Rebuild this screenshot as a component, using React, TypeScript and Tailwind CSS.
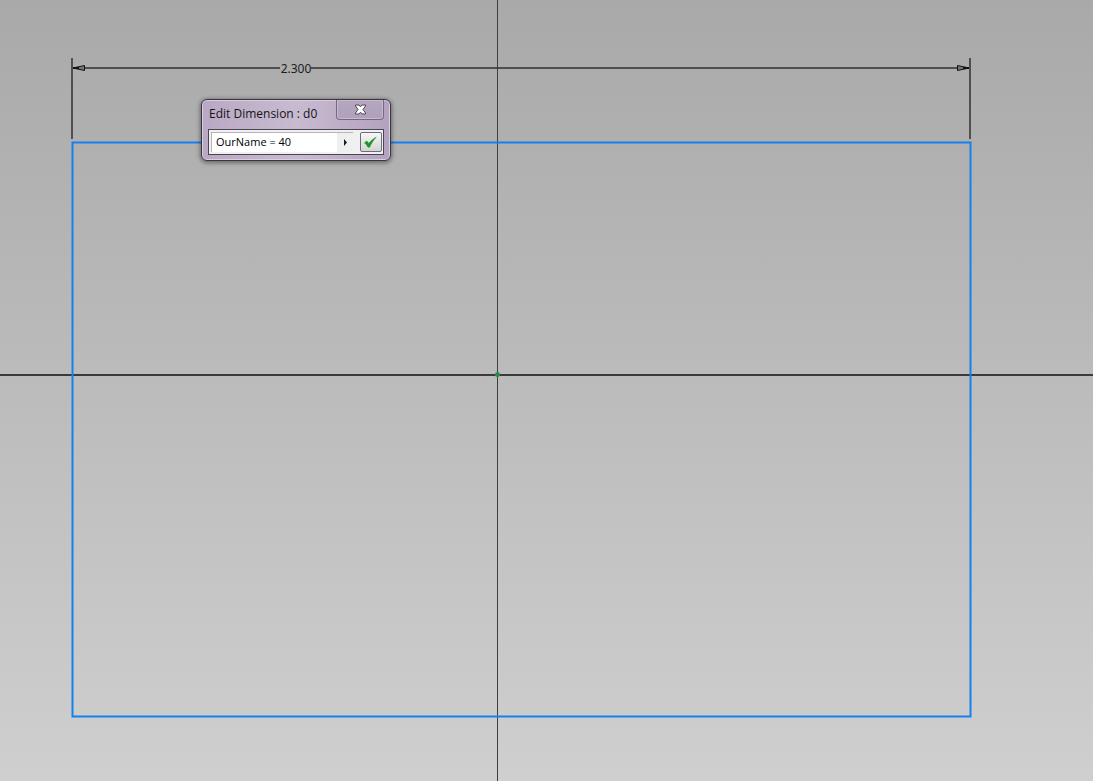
import { useState } from 'react';

function Sketch() {
  return (
    <svg className="absolute inset-0 w-full h-full" role="img" aria-label="Sketch with a width dimension of 2.300">
      {/* origin axes */}
      <line x1="0" y1="375" x2="100%" y2="375" stroke="#3a3a3a" strokeWidth="2" />
      <line x1="497.5" y1="0" x2="497.5" y2="100%" stroke="#3f3f3f" strokeWidth="1" />

      {/* rectangle */}
      <rect x="72.5" y="142.5" width="898" height="574" fill="none" stroke="#1580f0" strokeWidth="2" />
      <circle cx="497.5" cy="374.5" r="2.5" fill="#2a8a52" />

      {/* dimension */}
      <g stroke="#303030" strokeWidth="1">
        <line x1="72" y1="58" x2="72" y2="139" strokeWidth="1.5" />
        <line x1="970" y1="58" x2="970" y2="139" strokeWidth="1.5" />
        <line x1="84" y1="68" x2="280" y2="68" strokeWidth="1.5" />
        <line x1="311" y1="68" x2="958" y2="68" strokeWidth="1.5" />
        <path d="M73 68 L84.5 65.5 V70.5 Z" fill="#777" stroke="#111" />
        <path d="M969 68 L957.5 65.5 V70.5 Z" fill="#777" stroke="#111" />
        <path d="M73 68 H79 M969 68 H963" stroke="#111" strokeWidth="2" />
      </g>
      <text x="296" y="73" textAnchor="middle" className="font-['Noto_Sans',sans-serif] text-[12px]" fill="#1c1c1c">
        2.300
      </text>
    </svg>
  );
}

function EditDimension() {
  const [value, setValue] = useState('OurName = 40');

  return (
    <form
      onSubmit={(e) => e.preventDefault()}
      className="absolute left-[201px] top-[99px] w-[190px] rounded-md border border-[#39343f] bg-linear-to-r from-[#b9a8c4] via-[#c8bbd0] to-[#b3a2bf] px-1.5 pb-[5px] shadow-[inset_0_0_0_1px_#d9cfe0,0_1px_4px_1px_rgba(0,0,0,0.4)]">
      <div className="flex h-[29px] items-start justify-between">
        <label htmlFor="dimension" className="mt-1.5 ml-px font-['Open_Sans',sans-serif] text-[12px] leading-4 text-[#151515]">
          Edit Dimension : d0
        </label>
        <button
          type="button"
          aria-label="Close"
          className="flex h-5 w-12 items-center justify-center rounded-b border border-t-0 border-[#75697f] bg-linear-to-b from-[#b5a7bf] to-[#b0a0bc] shadow-[inset_0_0_0_1px_#c8bbd0]">
          <svg className="h-[11px] w-[13px]" viewBox="0 0 13 11">
            <path
              d="M1.5 1 H5 L6.5 2.8 L8 1 H11.5 V2 L9 5.5 L11.5 9 V10 H8 L6.5 8.2 L5 10 H1.5 V9 L4 5.5 L1.5 2 Z"
              fill="#fff"
              stroke="#4d4657"
            />
          </svg>
        </button>
      </div>

      <div className="flex h-[26px] items-center justify-between border border-[#4b4455] bg-[#f1f0f1] pl-0.5 pr-px">
        <div className="flex h-5 w-[142px] border-t border-l border-[#b5b5b8] bg-white">
          <input
            id="dimension"
            value={value}
            onChange={(e) => setValue(e.target.value)}
            className="min-w-0 flex-1 bg-white pl-1 font-['Open_Sans',sans-serif] text-[11px] text-black outline-none"
          />
          <button type="button" aria-label="More values" className="flex w-4 items-center justify-center bg-[#efefef]">
            <svg className="h-[7px] w-[3px]" viewBox="0 0 3 7">
              <path d="M0 0 L3 3.5 L0 7 Z" fill="#1a1a1a" />
            </svg>
          </button>
        </div>
        <button
          type="submit"
          aria-label="Accept"
          className="flex h-5 w-[22px] items-center justify-center rounded-xs border border-[#706c76] bg-linear-to-b from-[#f7f7f7] to-[#d4d4d4]">
          <svg className="h-3 w-[14px]" viewBox="0 0 14 12">
            <path d="M0.5 6.8 L2.8 5 L4.8 7.4 C6.8 4.8 9.3 2.6 12.2 1.2 C9.4 4.2 7.2 7.4 5.6 11.2 H4 C3.1 9.5 2 8 0.5 6.8 Z" fill="#189a22" stroke="#148a1e" strokeWidth="0.5" />
          </svg>
        </button>
      </div>
    </form>
  );
}

export default function App() {
  return (
    <main className="relative h-screen w-full overflow-hidden bg-linear-to-b from-[#a9a9a9] to-[#cfcfcf]">
      <Sketch />
      <EditDimension />
    </main>
  );
}
